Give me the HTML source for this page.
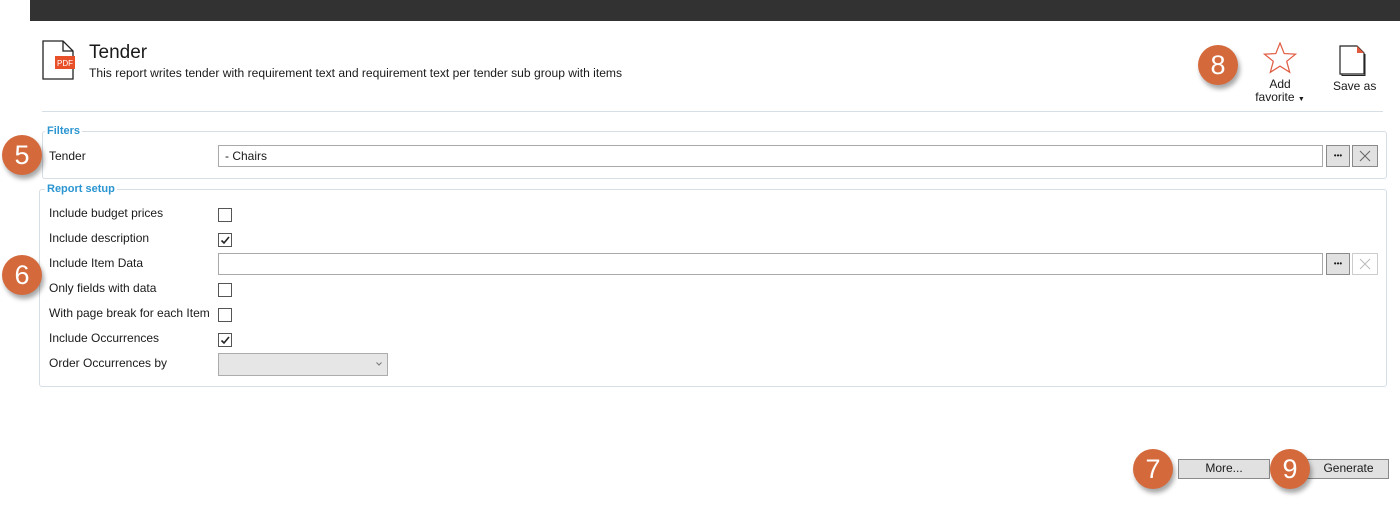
<!DOCTYPE html>
<html><head><style>
body{margin:0;width:1400px;height:508px;background:#fff;font-family:"Liberation Sans",sans-serif;font-size:12px;color:#1a1a1a;position:relative;overflow:hidden}
.a{position:absolute}
.bar{left:30px;top:0;width:1370px;height:21px;background:#323232}
.badge{width:40px;height:40px;border-radius:50%;background:#d4693b;color:#fff;font-size:27px;text-align:center;line-height:40px;box-shadow:2px 4px 5px rgba(0,0,0,.35)}
.grp{border:1px solid #d6dee6;border-radius:3px}
.gl{color:#2a95d0;font-weight:bold;font-size:11px;background:#fff;padding:0 2px}
.inp{border:1px solid #a9a9a9;background:#fff;height:20px}
.cb{width:12px;height:12px;border:1px solid #555;background:#fff}
.lbl{font-size:12px}
.btn{border:1px solid #8a8a8a;background:#e1e1e1;text-align:center;font-size:12px;line-height:17px}
</style></head><body>
<div class="a bar"></div>
<svg class="a" style="left:41px;top:40px" width="36" height="40" viewBox="0 0 36 40"><path d="M2 1h20l10 10v28H2z" fill="#fff" stroke="#222" stroke-width="1.3"/><path d="M22 1v10h10" fill="none" stroke="#222" stroke-width="1.3"/><rect x="14" y="16" width="20" height="13" fill="#e8502a"/><text x="16" y="26" font-size="8" fill="#fff" font-family="Liberation Sans">PDF</text></svg>
<div class="a" style="left:89px;top:42px;font-size:19px">Tender</div>
<div class="a" style="left:89px;top:66px;font-size:12.1px">This report writes tender with requirement text and requirement text per tender sub group with items</div>
<svg class="a" style="left:1263px;top:42px" width="34" height="32" viewBox="0 0 34 32"><path d="M17 1l4.2 10.6 11.3.6-8.8 7.1 3 11-9.7-6.2-9.7 6.2 3-11L1.5 12.2l11.3-.6z" fill="#fff" stroke="#e05a40" stroke-width="1.2"/></svg>
<div class="a" style="left:1250px;top:78px;width:60px;text-align:center;font-size:12px;line-height:13px">Add<br>favorite <span style="font-size:7px">▼</span></div>
<svg class="a" style="left:1338px;top:44px" width="28" height="32" viewBox="0 0 28 32"><path d="M2 2h17l7 7v21H2z" fill="#fff" stroke="#222" stroke-width="1.2"/><path d="M19 2l7 7h-7z" fill="#e05a40"/><path d="M4 30v1.5h23V10" fill="none" stroke="#222"/></svg>
<div class="a" style="left:1333px;top:79px;font-size:12px">Save as</div>
<div class="a" style="left:42px;top:111px;width:1341px;height:1px;background:#d6dee6"></div>
<div class="a grp" style="left:42px;top:131px;width:1343px;height:46px"></div>
<div class="a gl" style="left:45px;top:125px">Filters</div>
<div class="a lbl" style="left:49px;top:149px">Tender</div>
<div class="a inp" style="left:218px;top:145px;width:1103px"><span style="position:absolute;left:6px;top:3px;font-size:12px">- Chairs</span></div>
<div class="a btn" style="left:1326px;top:145px;width:22px;height:20px;font-size:8px;line-height:20px">•••</div>
<div class="a btn" style="left:1352px;top:145px;width:24px;height:20px"><svg width="24" height="20"><path d="M7 5l10 10M17 5L7 15" stroke="#666" stroke-width="1"/></svg></div>
<div class="a grp" style="left:39px;top:189px;width:1346px;height:196px"></div>
<div class="a gl" style="left:45px;top:183px">Report setup</div>
<div class="a lbl" style="left:49px;top:206px">Include budget prices</div>
<div class="a lbl" style="left:49px;top:231px">Include description</div>
<div class="a lbl" style="left:49px;top:256px">Include Item Data</div>
<div class="a lbl" style="left:49px;top:281px">Only fields with data</div>
<div class="a lbl" style="left:49px;top:306px">With page break for each Item</div>
<div class="a lbl" style="left:49px;top:331px">Include Occurrences</div>
<div class="a lbl" style="left:49px;top:356px">Order Occurrences by</div>
<div class="a cb" style="left:218px;top:208px"></div>
<div class="a cb" style="left:218px;top:233px"><svg width="12" height="12"><path d="M2.5 6.5l2.5 2.5 5-6" fill="none" stroke="#222" stroke-width="1.6"/></svg></div>
<div class="a inp" style="left:218px;top:253px;width:1103px"></div>
<div class="a btn" style="left:1326px;top:253px;width:22px;height:20px;font-size:8px;line-height:20px">•••</div>
<div class="a" style="left:1352px;top:253px;width:24px;height:20px;border:1px solid #ccc"><svg width="24" height="20"><path d="M7 5l10 10M17 5L7 15" stroke="#bbb" stroke-width="1"/></svg></div>
<div class="a cb" style="left:218px;top:283px"></div>
<div class="a cb" style="left:218px;top:308px"></div>
<div class="a cb" style="left:218px;top:333px"><svg width="12" height="12"><path d="M2.5 6.5l2.5 2.5 5-6" fill="none" stroke="#222" stroke-width="1.6"/></svg></div>
<div class="a" style="left:218px;top:353px;width:168px;height:21px;border:1px solid #acacac;background:#e6e6e6"><svg style="position:absolute;right:5px;top:8px" width="6" height="4"><path d="M0.5 0.5l2.5 2.5 2.5-2.5" fill="none" stroke="#777"/></svg></div>
<div class="a btn" style="left:1178px;top:459px;width:90px;height:18px">More...</div>
<div class="a btn" style="left:1288px;top:459px;width:99px;height:18px"><span style="margin-left:20px">Generate</span></div>
<div class="a badge" style="left:2px;top:135px">5</div>
<div class="a badge" style="left:2px;top:255px">6</div>
<div class="a badge" style="left:1198px;top:45px">8</div>
<div class="a badge" style="left:1133px;top:449px">7</div>
<div class="a badge" style="left:1270px;top:449px">9</div>
</body></html>
